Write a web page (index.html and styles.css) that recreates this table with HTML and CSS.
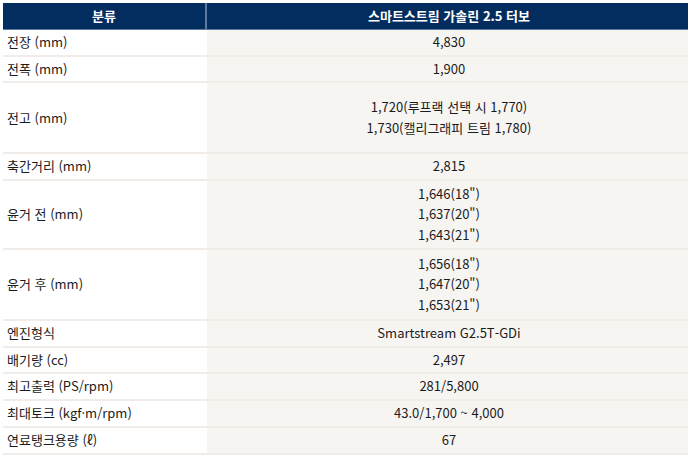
FILE: index.html
```html
<!DOCTYPE html>
<html lang="ko">
<head>
<meta charset="utf-8">
<link rel="stylesheet" href="styles.css">
</head>
<body>
<div class="spec">
  <div class="row head">
    <div class="cell label">분류</div>
    <div class="cell value">스마트스트림 가솔린 2.5 터보</div>
  </div>
  <div class="row">
    <div class="cell label">전장 (mm)</div>
    <div class="cell value">4,830</div>
  </div>
  <div class="row">
    <div class="cell label">전폭 (mm)</div>
    <div class="cell value">1,900</div>
  </div>
  <div class="row tall">
    <div class="cell label">전고 (mm)</div>
    <div class="cell value gap"><span>1,720(루프랙 선택 시 1,770)</span><span>1,730(캘리그래피 트림 1,780)</span></div>
  </div>
  <div class="row">
    <div class="cell label">축간거리 (mm)</div>
    <div class="cell value">2,815</div>
  </div>
  <div class="row triple">
    <div class="cell label">윤거 전 (mm)</div>
    <div class="cell value"><span>1,646(18")</span><span>1,637(20")</span><span>1,643(21")</span></div>
  </div>
  <div class="row tall">
    <div class="cell label">윤거 후 (mm)</div>
    <div class="cell value"><span>1,656(18")</span><span>1,647(20")</span><span>1,653(21")</span></div>
  </div>
  <div class="row">
    <div class="cell label">엔진형식</div>
    <div class="cell value">Smartstream G2.5T-GDi</div>
  </div>
  <div class="row">
    <div class="cell label">배기량 (cc)</div>
    <div class="cell value">2,497</div>
  </div>
  <div class="row">
    <div class="cell label">최고출력 (PS/rpm)</div>
    <div class="cell value">281/5,800</div>
  </div>
  <div class="row">
    <div class="cell label">최대토크 (kgf·m/rpm)</div>
    <div class="cell value">43.0/1,700 ~ 4,000</div>
  </div>
  <div class="row">
    <div class="cell label">연료탱크용량 (ℓ)</div>
    <div class="cell value">67</div>
  </div>
</div>
</body>
</html>
```
FILE: styles.css
```css
html, body {
  margin: 0;
  padding: 0;
  background: #ffffff;
  overflow: hidden;
}
body {
  padding: 3px 0 0 3px;
  font-family: "Noto Sans CJK KR", "Noto Sans", sans-serif;
  font-size: 13px;
  color: #1b1b1b;
}
.spec {
  width: 688px;
  display: flex;
  flex-direction: column;
}
.row {
  display: grid;
  grid-template-columns: 204px 1fr;
  height: 26.7px;
  box-sizing: border-box;
  border-bottom: 2px solid #f1ece7;
}
.row.tall { height: 71px; }
.row.triple { height: 69px; }
.cell {
  display: flex;
  align-items: center;
  line-height: 20.7px;
}
.label {
  background: #ffffff;
  padding-left: 4px;
}
.value {
  background: #f6f5f2;
  flex-direction: column;
  justify-content: center;
  align-items: center;
  text-align: center;
}
.value.gap span + span { margin-top: 1px; }
.row.head {
  height: 27px;
  border-bottom: 1px solid #5d7ba0;
  background: #022d5e;
}
.row.head .cell {
  background: #022d5e;
  color: #ffffff;
  font-weight: 700;
  justify-content: center;
}
.row.head .label {
  padding-left: 0;
  border-right: 2px solid #5d7ba0;
}
```
